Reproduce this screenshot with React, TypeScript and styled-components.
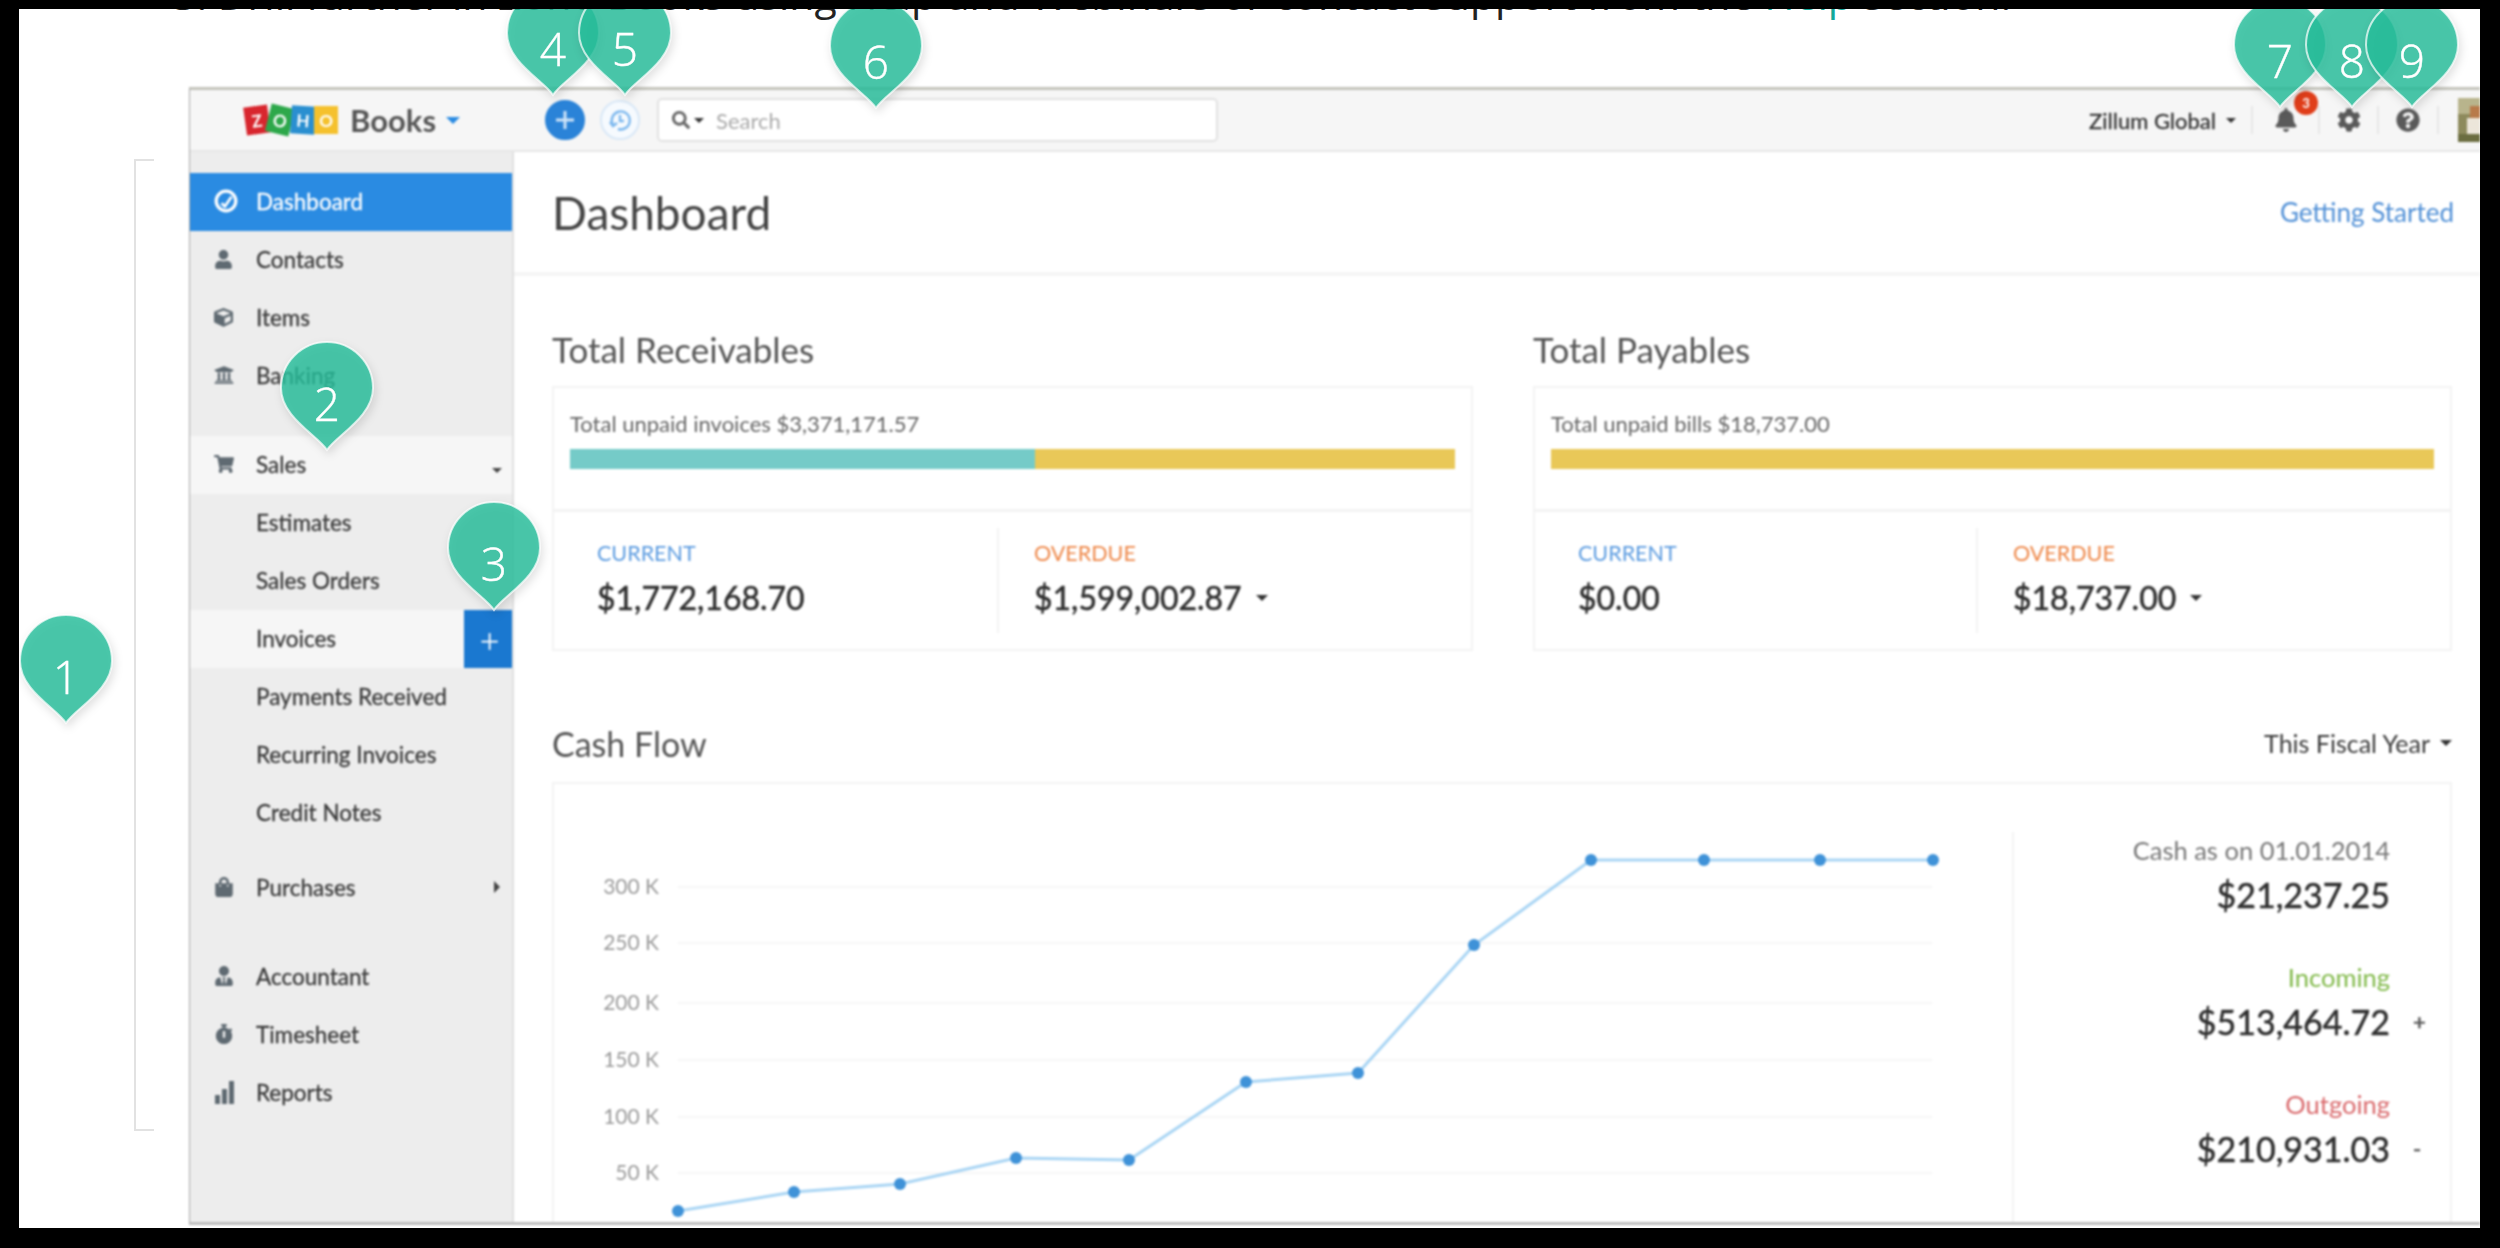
import React from 'react';
import styled, { createGlobalStyle } from 'styled-components';
import {
  FaBell,
  FaCog,
  FaCube,
  FaQuestionCircle,
  FaSearch,
  FaShoppingBag,
  FaShoppingCart,
  FaStopwatch,
  FaUniversity,
  FaUser,
  FaUserTie,
} from 'react-icons/fa';

const GlobalStyle = createGlobalStyle`
  html, body {
    margin: 0;
    padding: 0;
    width: 2500px;
    height: 1248px;
    overflow: hidden;
    background: #000;
    font-family: "Lato", "Liberation Sans", sans-serif;
  }
  * { box-sizing: border-box; }
`;

const Canvas = styled.div`
  position: relative;
  margin: 9px 20px 0 19px;
  width: 2461px;
  height: 1219px;
  background: #fff;
  overflow: hidden;
`;

const IntroLine = styled.div`
  display: flow-root;
  height: 78px;
  padding-left: 154px;
`;

const IntroText = styled.p`
  margin: -33px 0 0;
  font-family: "Open Sans", "Liberation Sans", sans-serif;
  font-size: 41px;
  line-height: 36px;
  color: #222;
  white-space: nowrap;
  span { color: #12a89a; }
`;

const AppFrame = styled.div`
  margin-left: 170px;
  width: 2291px;
  height: 1138px;
  display: flex;
  flex-direction: column;
  overflow: hidden;
  background: #fff;
  border-top: 3px solid #c4c4bc;
  border-left: 1px solid #a8a8a8;
  border-bottom: 3px solid #bdbdbd;
  filter: blur(1px);
`;

const Toolbar = styled.header`
  height: 62px;
  flex: none;
  display: flex;
  align-items: center;
  padding-left: 55px;
  background: #f6f6f6;
  border-bottom: 2px solid #e6e6e6;
`;

const Logo = styled.div`
  display: flex;
  align-items: center;
  width: 95px;
`;

const Tile = styled.span<{ $bg: string; $turn: number; $w: number }>`
  width: ${p => p.$w}px;
  height: 28px;
  margin-right: -1px;
  display: flex;
  align-items: center;
  justify-content: center;
  background: ${p => p.$bg};
  color: #fff;
  font-size: 17px;
  font-weight: 700;
  transform: rotate(${p => p.$turn}deg);
`;

const BrandName = styled.span`
  margin-left: 10px;
  font-size: 31px;
  font-weight: 700;
  color: #555;
`;

const Caret = styled.i<{ $size?: number; $color?: string; $gap?: number }>`
  display: inline-block;
  flex: none;
  margin-left: ${p => p.$gap ?? 10}px;
  border-left: ${p => p.$size ?? 6}px solid transparent;
  border-right: ${p => p.$size ?? 6}px solid transparent;
  border-top: ${p => p.$size ?? 6}px solid ${p => p.$color ?? '#333'};
`;

const RoundButton = styled.button<{ $solid?: boolean; $gap: number }>`
  width: 40px;
  height: 40px;
  margin-left: ${p => p.$gap}px;
  padding: 0;
  flex: none;
  display: flex;
  align-items: center;
  justify-content: center;
  border-radius: 50%;
  border: 2px solid ${p => (p.$solid ? '#2a83d8' : '#d9e8f7')};
  background: ${p => (p.$solid ? '#2a83d8' : '#f6fafe')};
`;

const SearchBox = styled.div`
  width: 561px;
  height: 44px;
  margin-left: 17px;
  padding-left: 13px;
  display: flex;
  align-items: center;
  flex: none;
  background: #fff;
  border: 2px solid #e2e2e2;
  border-radius: 5px;
  color: #666;
`;

const SearchHint = styled.span`
  margin-left: 12px;
  font-size: 22px;
  color: #aaa;
`;

const ToolbarRight = styled.div`
  margin-left: auto;
  display: flex;
  align-items: center;
`;

const OrgName = styled.span`
  font-size: 22px;
  color: #333;
  -webkit-text-stroke: 0.3px #333;
`;

const ToolCell = styled.div<{ $w: number; $gap?: number }>`
  position: relative;
  width: ${p => p.$w}px;
  height: 28px;
  margin-left: ${p => p.$gap ?? 0}px;
  display: flex;
  align-items: center;
  justify-content: center;
  border-left: 2px solid #e6e6e6;
  color: #5a5a5a;
`;

const Badge = styled.span`
  position: absolute;
  top: -15px;
  left: 41px;
  width: 24px;
  height: 24px;
  display: flex;
  align-items: center;
  justify-content: center;
  border-radius: 50%;
  background: #e03e1a;
  color: #fff;
  font-size: 13px;
  font-weight: 700;
`;

const Avatar = styled.svg`
  display: block;
  width: 22px;
  height: 44px;
  margin-left: 19px;
  flex: none;
`;

const Body = styled.div`
  flex: 1;
  display: flex;
  min-height: 0;
`;

const Sidebar = styled.nav`
  width: 324px;
  flex: none;
  padding-top: 21px;
  background: #ededed;
  border-right: 2px solid #e0e0e0;
`;

const NavRow = styled.div<{ $active?: boolean; $open?: boolean; $gap?: number; $sub?: boolean }>`
  position: relative;
  height: 58px;
  margin-top: ${p => p.$gap ?? 0}px;
  padding: 0 0 2px ${p => (p.$sub ? 66 : 24)}px;
  display: flex;
  align-items: center;
  font-size: 22.5px;
  color: ${p => (p.$active ? '#fff' : '#3a3a3a')};
  background: ${p => (p.$active ? '#2a8be2' : p.$open ? '#f6f6f6' : 'transparent')};
  -webkit-text-stroke: 0.3px currentColor;
`;

const NavIcon = styled.span`
  width: 42px;
  flex: none;
  display: flex;
  align-items: center;
  color: #5f6a72;
`;

const NavArrow = styled.span`
  margin-left: auto;
  margin-right: 10px;
`;

const SideArrow = styled.i`
  margin-left: auto;
  margin-right: 12px;
  border-top: 6px solid transparent;
  border-bottom: 6px solid transparent;
  border-left: 6px solid #444;
`;

const AddButton = styled.span`
  position: absolute;
  top: 0;
  right: 0;
  bottom: 0;
  width: 48px;
  display: flex;
  align-items: center;
  justify-content: center;
  padding-left: 3px;
  background: #1a78d0;
  color: #fff;
  font-size: 34px;
  font-weight: 300;
`;

const Main = styled.main`
  flex: 1;
  min-width: 0;
  display: flex;
  flex-direction: column;
  padding: 0 28px 0 38px;
  overflow: hidden;
`;

const PageHeader = styled.div`
  height: 124px;
  margin: 0 -28px 0 -38px;
  padding: 0 26px 0 38px;
  flex: none;
  display: flex;
  align-items: center;
  justify-content: space-between;
  border-bottom: 4px solid #f5f5f5;
`;

const PageTitle = styled.h1`
  margin: 0;
  font-size: 46px;
  font-weight: 400;
  color: #444;
`;

const HeaderLink = styled.a`
  font-size: 26px;
  color: #4f8fd6;
`;

const Summary = styled.div`
  margin-top: 53px;
  flex: none;
  display: grid;
  grid-template-columns: 921px 919px;
  column-gap: 60px;
`;

const SectionTitle = styled.h2`
  margin: 0 0 17px;
  height: 40px;
  font-size: 35px;
  line-height: 40px;
  font-weight: 400;
  color: #555;
`;

const Card = styled.div`
  height: 265px;
  border: 2px solid #f3f3f3;
  display: flex;
  flex-direction: column;
`;

const CardTop = styled.div`
  height: 124px;
  flex: none;
  padding: 21px 16px 0;
  border-bottom: 3px solid #f3f3f3;
`;

const CardCaption = styled.div`
  height: 30px;
  font-size: 22px;
  line-height: 30px;
  color: #666;
`;

const Bar = styled.div`
  display: flex;
  height: 20px;
  margin-top: 10px;
`;

const BarPart = styled.div<{ $grow: number; $color: string }>`
  flex: ${p => p.$grow};
  background: ${p => p.$color};
`;

const CardBottom = styled.div`
  flex: 1;
  display: flex;
  padding: 16px 0;
`;

const Figure = styled.div<{ $w?: number; $divided?: boolean }>`
  width: ${p => (p.$w ? `${p.$w}px` : 'auto')};
  flex: ${p => (p.$w ? 'none' : 1)};
  padding: 11px 0 0 ${p => (p.$divided ? 35 : 43)}px;
  border-left: ${p => (p.$divided ? '2px solid #f3f3f3' : 'none')};
`;

const FigureLabel = styled.div<{ $color: string }>`
  font-size: 21.5px;
  line-height: 28px;
  color: ${p => p.$color};
`;

const FigureValue = styled.div`
  margin-top: 9px;
  display: flex;
  align-items: center;
  font-size: 32px;
  line-height: 44px;
  color: #2e2e2e;
  -webkit-text-stroke: 0.5px #2e2e2e;
`;

const FlowHeader = styled.div`
  margin-top: 72px;
  height: 40px;
  flex: none;
  display: flex;
  align-items: center;
  justify-content: space-between;
`;

const FlowTitle = styled.h2`
  margin: 0;
  font-size: 34px;
  font-weight: 400;
  color: #555;
`;

const RangePicker = styled.div`
  display: flex;
  align-items: center;
  font-size: 25px;
  color: #3a3a3a;
`;

const FlowCard = styled.div`
  flex: none;
  height: 460px;
  margin-top: 19px;
  display: flex;
  border: 2px solid #f3f3f3;
`;

const Chart = styled.svg`
  display: block;
  width: 1458px;
  flex: none;
`;

const FlowStats = styled.aside`
  flex: 1;
  margin-top: 48px;
  padding-right: 60px;
  border-left: 2px solid #f3f3f3;
  text-align: right;
`;

const Stat = styled.div`
  height: 127px;
`;

const StatLabel = styled.div<{ $color: string }>`
  font-size: 25.5px;
  line-height: 36px;
  color: ${p => p.$color};
`;

const StatValue = styled.div`
  margin-top: 5px;
  display: flex;
  justify-content: flex-end;
  align-items: center;
  font-size: 34px;
  line-height: 44px;
  color: #2e2e2e;
  -webkit-text-stroke: 0.5px #2e2e2e;
`;

const StatMark = styled.span`
  width: 0;
  font-size: 22px;
  color: #666;
  transform: translateX(23px);
`;

const Bracket = styled.div`
  position: absolute;
  left: 115px;
  top: 150px;
  width: 20px;
  height: 972px;
  border: 2px solid #e2e2e2;
  border-right: none;
`;

const PinBox = styled.div<{ $x: number; $y: number }>`
  position: absolute;
  left: ${p => p.$x - 19 - 48}px;
  top: ${p => p.$y - 9 - 109}px;
  width: 96px;
  height: 112px;
  display: flex;
  justify-content: center;
  padding-top: 38px;
  filter: drop-shadow(2px 4px 4px rgba(0, 0, 0, 0.14));
`;

const PinShape = styled.svg`
  position: absolute;
  inset: 0;
  width: 96px;
  height: 112px;
`;

const PinNumber = styled.span`
  position: relative;
  font-family: "Open Sans", "Liberation Sans", sans-serif;
  font-size: 46px;
  font-weight: 300;
  line-height: 48px;
  color: #fff;
  -webkit-text-stroke: 0.4px #fff;
`;

const PINS = [
  { n: 1, x: 66, y: 723 },
  { n: 2, x: 327, y: 450 },
  { n: 3, x: 494, y: 610 },
  { n: 4, x: 553, y: 95 },
  { n: 5, x: 625, y: 95 },
  { n: 6, x: 876, y: 108 },
  { n: 7, x: 2280, y: 107 },
  { n: 8, x: 2352, y: 107 },
  { n: 9, x: 2412, y: 107 },
];

const POINTS = [
  [678, 1211], [794, 1192], [900, 1184], [1016, 1158], [1129, 1160], [1246, 1082],
  [1358, 1073], [1474, 945], [1591, 860], [1704, 860], [1820, 860], [1933, 860],
];

const TICKS = [
  { label: '300 K', y: 887 },
  { label: '250 K', y: 943 },
  { label: '200 K', y: 1003 },
  { label: '150 K', y: 1060 },
  { label: '100 K', y: 1117 },
  { label: '50 K', y: 1173 },
];

const DashboardIcon = () => (
  <svg width="24" height="24" viewBox="0 0 22 22" fill="none" stroke="#fff" strokeWidth="3">
    <circle cx="11" cy="11" r="9" />
    <path d="M7 13l3 3 6-9" strokeWidth="2.5" />
  </svg>
);

const HistoryIcon = () => (
  <svg width="24" height="24" viewBox="0 0 24 24" fill="none" stroke="#7db8ee" strokeWidth="2.4">
    <path d="M5 17a9 9 0 1 1 5 4" />
    <path d="M2 14l3 4 4-3" />
    <path d="M12 7v6h4" />
  </svg>
);

const ReportsIcon = () => (
  <svg width="22" height="24" viewBox="0 0 22 24" fill="#5f6a72">
    <rect x="1" y="15" width="5" height="9" />
    <rect x="8" y="9" width="5" height="15" />
    <rect x="15" y="1" width="5" height="23" />
  </svg>
);

const Pin = ({ n, x, y }: { n: number; x: number; y: number }) => (
  <PinBox $x={x} $y={y}>
    <PinShape viewBox="0 0 96 112">
      <path
        d="M48 109 C38 94 2 76 2 47 A46 46 0 0 1 94 47 C94 76 58 94 48 109Z"
        fill="rgba(38,190,155,0.82)"
        stroke="rgba(255,255,255,0.7)"
        strokeWidth="2"
      />
    </PinShape>
    <PinNumber>{n}</PinNumber>
  </PinBox>
);

export default function App() {
  return (
    <>
      <GlobalStyle />
      <Canvas>
        <IntroLine>
          <IntroText>
            3. Drill further in Zoho Books using Help and Webinars or contact support from the <span>Help</span> section.
          </IntroText>
        </IntroLine>
        <AppFrame>
          <Toolbar>
            <Logo>
              <Tile $bg="#d8262e" $turn={-8} $w={24}>Z</Tile>
              <Tile $bg="#2da84a" $turn={14} $w={24}>O</Tile>
              <Tile $bg="#2a8fd0" $turn={4} $w={24}>H</Tile>
              <Tile $bg="#f5c12d" $turn={0} $w={24}>O</Tile>
            </Logo>
            <BrandName>Books</BrandName>
            <Caret $size={7} $color="#2a8be2" />
            <RoundButton $solid $gap={85}>
              <svg width="22" height="22" viewBox="0 0 22 22" stroke="#cfe4f8" strokeWidth="3">
                <path d="M11 2v18M2 11h18" />
              </svg>
            </RoundButton>
            <RoundButton $gap={15}>
              <HistoryIcon />
            </RoundButton>
            <SearchBox>
              <FaSearch size={18} />
              <Caret $size={5} $color="#333" $gap={4} />
              <SearchHint>Search</SearchHint>
            </SearchBox>
            <ToolbarRight>
              <OrgName>Zillum Global</OrgName>
              <Caret $size={5} $color="#333" $gap={10} />
              <ToolCell $w={67} $gap={15}>
                <FaBell size={24} />
                <Badge>3</Badge>
              </ToolCell>
              <ToolCell $w={59}><FaCog size={24} /></ToolCell>
              <ToolCell $w={60}><FaQuestionCircle size={24} /></ToolCell>
              <ToolCell $w={1} />
              <Avatar viewBox="0 0 22 44">
                <rect width="22" height="44" fill="#8d8a5c" />
                <rect width="22" height="16" fill="#b8b48c" />
                <rect x="12" y="8" width="10" height="12" fill="#b87a4a" />
                <rect x="9" y="20" width="13" height="16" fill="#ece6da" />
                <rect y="36" width="22" height="8" fill="#6b6d40" />
              </Avatar>
            </ToolbarRight>
          </Toolbar>
          <Body>
            <Sidebar>
              <NavRow $active><NavIcon><DashboardIcon /></NavIcon>Dashboard</NavRow>
              <NavRow><NavIcon><FaUser size={19} /></NavIcon>Contacts</NavRow>
              <NavRow><NavIcon><FaCube size={19} /></NavIcon>Items</NavRow>
              <NavRow><NavIcon><FaUniversity size={20} /></NavIcon>Banking</NavRow>
              <NavRow $open $gap={31}>
                <NavIcon><FaShoppingCart size={20} /></NavIcon>Sales
                <NavArrow><Caret $size={5} $color="#444" $gap={0} /></NavArrow>
              </NavRow>
              <NavRow $sub>Estimates</NavRow>
              <NavRow $sub>Sales Orders</NavRow>
              <NavRow $sub $open>Invoices<AddButton>+</AddButton></NavRow>
              <NavRow $sub>Payments Received</NavRow>
              <NavRow $sub>Recurring Invoices</NavRow>
              <NavRow $sub>Credit Notes</NavRow>
              <NavRow $gap={17}>
                <NavIcon><FaShoppingBag size={20} /></NavIcon>Purchases
                <SideArrow />
              </NavRow>
              <NavRow $gap={31}><NavIcon><FaUserTie size={20} /></NavIcon>Accountant</NavRow>
              <NavRow><NavIcon><FaStopwatch size={20} /></NavIcon>Timesheet</NavRow>
              <NavRow><NavIcon><ReportsIcon /></NavIcon>Reports</NavRow>
            </Sidebar>
            <Main>
              <PageHeader>
                <PageTitle>Dashboard</PageTitle>
                <HeaderLink>Getting Started</HeaderLink>
              </PageHeader>
              <Summary>
                <section>
                  <SectionTitle>Total Receivables</SectionTitle>
                  <Card>
                    <CardTop>
                      <CardCaption>Total unpaid invoices $3,371,171.57</CardCaption>
                      <Bar>
                        <BarPart $grow={466} $color="#75cbc8" />
                        <BarPart $grow={420} $color="#e9c858" />
                      </Bar>
                    </CardTop>
                    <CardBottom>
                      <Figure $w={443}>
                        <FigureLabel $color="#5b9be0">CURRENT</FigureLabel>
                        <FigureValue>$1,772,168.70</FigureValue>
                      </Figure>
                      <Figure $divided>
                        <FigureLabel $color="#ee8748">OVERDUE</FigureLabel>
                        <FigureValue>$1,599,002.87<Caret $size={6} $gap={14} /></FigureValue>
                      </Figure>
                    </CardBottom>
                  </Card>
                </section>
                <section>
                  <SectionTitle>Total Payables</SectionTitle>
                  <Card>
                    <CardTop>
                      <CardCaption>Total unpaid bills $18,737.00</CardCaption>
                      <Bar>
                        <BarPart $grow={1} $color="#e9c858" />
                      </Bar>
                    </CardTop>
                    <CardBottom>
                      <Figure $w={441}>
                        <FigureLabel $color="#5b9be0">CURRENT</FigureLabel>
                        <FigureValue>$0.00</FigureValue>
                      </Figure>
                      <Figure $divided>
                        <FigureLabel $color="#ee8748">OVERDUE</FigureLabel>
                        <FigureValue>$18,737.00<Caret $size={6} $gap={14} /></FigureValue>
                      </Figure>
                    </CardBottom>
                  </Card>
                </section>
              </Summary>
              <FlowHeader>
                <FlowTitle>Cash Flow</FlowTitle>
                <RangePicker>This Fiscal Year<Caret $size={6} $gap={10} /></RangePicker>
              </FlowHeader>
              <FlowCard>
                <Chart viewBox="554 784 1458 458" height="458">
                  {TICKS.map(t => (
                    <g key={t.label}>
                      <line x1="678" x2="1932" y1={t.y} y2={t.y} stroke="#f6f6f6" strokeWidth="2" />
                      <text x="659" y={t.y + 7} textAnchor="end" fontSize="21" fill="#9a9a9a">{t.label}</text>
                    </g>
                  ))}
                  <polyline
                    points={POINTS.map(p => p.join(',')).join(' ')}
                    fill="none"
                    stroke="#a9d5f4"
                    strokeWidth="3"
                  />
                  {POINTS.map(([x, y]) => (
                    <circle key={x} cx={x} cy={y} r="6" fill="#3f92d8" />
                  ))}
                </Chart>
                <FlowStats>
                  <Stat>
                    <StatLabel $color="#777">Cash as on 01.01.2014</StatLabel>
                    <StatValue>$21,237.25</StatValue>
                  </Stat>
                  <Stat>
                    <StatLabel $color="#7fb847">Incoming</StatLabel>
                    <StatValue>$513,464.72<StatMark>+</StatMark></StatValue>
                  </Stat>
                  <Stat>
                    <StatLabel $color="#d9686b">Outgoing</StatLabel>
                    <StatValue>$210,931.03<StatMark>-</StatMark></StatValue>
                  </Stat>
                  <Stat>
                    <StatLabel $color="#5b9be0">Cash as on 31.12.2014</StatLabel>
                  </Stat>
                </FlowStats>
              </FlowCard>
            </Main>
          </Body>
        </AppFrame>
        <Bracket />
        {PINS.map(p => (
          <Pin key={p.n} n={p.n} x={p.x} y={p.y} />
        ))}
      </Canvas>
    </>
  );
}
